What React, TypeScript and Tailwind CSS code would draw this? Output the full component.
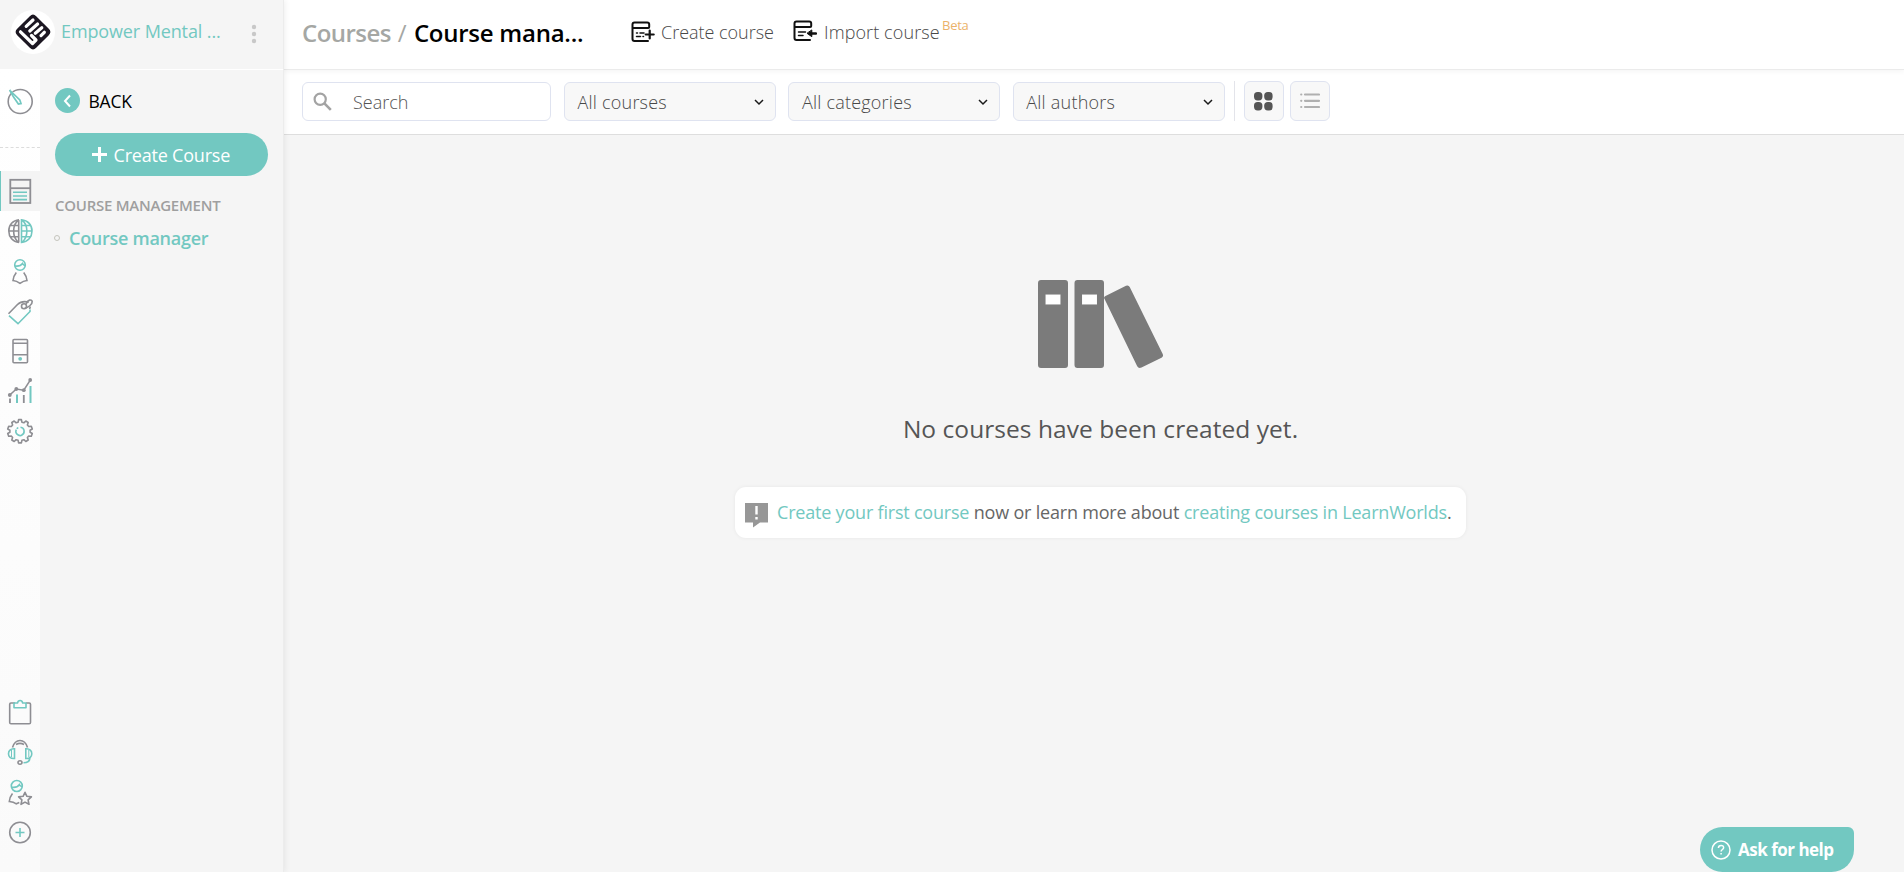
import React from "react";

const TEAL = "#72c8c1";
const GRAY = "#8e8e93";

function RailIcon({ children, active = false }: { children: React.ReactNode; active?: boolean }) {
  return (
    <a
      className={
        active
          ? "flex h-10 w-10 shrink-0 items-center justify-center border-l border-[#72c8c1] bg-[#f4f4f4] pr-px"
          : "flex h-10 w-10 shrink-0 items-center justify-center"
      }
    >
      <svg width="28" height="28" viewBox="0 0 28 28" fill="none" stroke={GRAY} strokeWidth="1.6">
        {children}
      </svg>
    </a>
  );
}

function Rail() {
  return (
    <nav className="flex w-10 shrink-0 flex-col bg-linear-to-b from-white to-[#fafafa] pt-[11px] pb-5">
      <RailIcon>
        <circle cx="14.2" cy="14.5" r="12" />
        <path d="M4 3.5 12 7.8 15 15.5 12.8 17.6 8 12.5Z" fill="#fff" stroke="none" />
        <path d="M4 3.5 13.8 13 15 16.6 12.4 17 7.4 9.8 3.6 3Z" fill="#fff" stroke={TEAL} strokeWidth="1.7" />
      </RailIcon>
      <div className="mt-[26px] mb-[23px] border-t border-dashed border-[#dcdcdc]" />
      <RailIcon active>
        <rect x="4.3" y="2.8" width="20" height="23.2" strokeWidth="1.8" />
        <path d="M4 11.2h20.5" strokeWidth="1.8" />
        <path d="M7 15.2h14M7 19h14M7 22.6h14" stroke={TEAL} strokeWidth="1.6" />
      </RailIcon>
      <RailIcon>
        <path d="M13 2.8C6.800 3.300 2.800 8 2.800 14S6.800 25 13 25.500M12.500 3C6 8 6 20 12.500 25.300M12.700 3v22.500M4.500 8.500h8M3 14h9.500M4.500 19.800h8" />
        <path
          d="M15.500 2.800C22 3.300 26 8 26 14S22 25 15.500 25.500ZM16 3c6.500 5 6.500 17 0 22.300M15.500 8.500h9M15.500 14H26M15.500 19.800h9"
          stroke={TEAL}
        />
      </RailIcon>
      <RailIcon>
        <circle cx="14" cy="8" r="5.300" stroke={TEAL} />
        <path d="M9 9c3.500.500 6-.300 7.500-2.500.6 1.200 1.500 1.800 2.800 2" stroke={TEAL} />
        <path d="M10.300 15.500C8.300 18 7.300 20.500 7 23.500c2 .200 4.500 1 7 2.800 2.500-1.800 5-2.600 7-2.800-.300-3-1.300-5.500-3.300-8" />
      </RailIcon>
      <RailIcon>
        <path d="M2.500 16.800 11.500 7.500C14.500 4.500 18.500 4 22.800 5.200M24.300 9.500 23.600 12" />
        <circle cx="18" cy="9.300" r="2.500" />
        <path d="M18.500 11.500C22 10.500 26.500 7.500 26.200 4.500 25.700 2 21.500 2.500 20.200 7" />
        <path d="m3 18.700 9 8L24 14.500v-2" stroke={TEAL} />
      </RailIcon>
      <RailIcon>
        <rect x="7" y="2.500" width="14.500" height="23.300" rx="1" />
        <path d="M7 6.300h14.500M7 17.800h14.500" />
        <circle cx="14.200" cy="21.800" r="1.900" fill={TEAL} stroke="none" />
      </RailIcon>
      <RailIcon>
        <path d="m3.800 18 6.500-6 7.500 1.200 6.300-9.800" />
        <g fill={GRAY} stroke="none">
          <circle cx="3.800" cy="18" r="1.900" />
          <circle cx="10.300" cy="12" r="1.900" />
          <circle cx="17.800" cy="13.200" r="1.900" />
          <circle cx="24.200" cy="3" r="1.900" />
        </g>
        <path d="M4 21.500V26M17.800 18v8" strokeWidth="1.800" />
        <path d="M11 17.500V26M24.500 9v17" stroke={TEAL} strokeWidth="2" />
      </RailIcon>
      <RailIcon>
        <path
          strokeLinejoin="round"
          d="M12.600 2.600h2.800l.5 2.600 2 .6 1.900-1.800 2.400 1.500-.8 2.500 1.300 1.500 2.600-.2 1 2.700-2.200 1.300v1.900l2.200 1.300-1 2.700-2.600-.2-1.300 1.500.8 2.500-2.400 1.500-1.900-1.800-2 .6-.5 2.600h-2.800l-.5-2.600-2-.6-1.900 1.800-2.400-1.500.8-2.500-1.300-1.500-2.600.2-1-2.700 2.200-1.300v-1.900l-2.200-1.300 1-2.700 2.600.2 1.300-1.500-.8-2.500L8.200 4l1.900 1.800 2-.6Z"
        />
        <path d="M14.500 10.200a4.100 4.100 0 0 1 1 7.900M17.200 16.900a4.100 4.100 0 0 1-6.900-4.300M10.800 11.800a4.100 4.100 0 0 1 1.500-1.200" stroke={TEAL} />
      </RailIcon>
      <div className="grow" />
      <RailIcon>
        <path d="M9 5H5q-1.300 0-1.300 1.300v18.200q0 1.300 1.300 1.300h18.200q1.300 0 1.300-1.300V6.300Q24.500 5 23.200 5H20" />
        <path d="M8 5h3.500q.5-2.500 2.600-2.500T16.700 5H20v4.700H8Z" stroke={TEAL} strokeLinejoin="round" />
      </RailIcon>
      <RailIcon>
        <path d="M6.500 9.500C8 4.500 10.500 2.500 14 2.500s6 2 7.500 7M10 6.500c2.500-1.400 5.500-1.400 8 0" />
        <path
          d="M8.500 10.800v9.700C4.500 21 2.500 18.500 2.500 15.700s2-5.300 6-4.900ZM19.800 10.800v9.700c4 .5 6-2 6-4.800s-2-5.300-6-4.900ZM24 19.800c-.300 3-2.500 5-6.500 5"
          stroke={TEAL}
        />
        <path d="M5.500 12v7M22.800 12v7" stroke={TEAL} strokeWidth="1" />
        <ellipse cx="14" cy="24.500" rx="2" ry="1.700" />
      </RailIcon>
      <RailIcon>
        <circle cx="10.800" cy="8" r="5.500" stroke={TEAL} />
        <path d="M5.800 9.200c3.500.500 6-.300 7.500-2.500.6 1.200 1.500 1.600 2.800 1.800" stroke={TEAL} />
        <path d="M6.500 15.500C4.500 18 3.500 20.500 3.300 23.500c2.200.200 5.200 1 7 2.300l3-1.300" />
        <path
          strokeLinejoin="round"
          d="m19 14.300 1.900 4 4.500.600-3.300 3 .9 4.400-4-2.200-4 2.200.9-4.400-3.300-3 4.500-.6Z"
        />
      </RailIcon>
      <RailIcon>
        <circle cx="14" cy="14.500" r="10.300" />
        <path d="M14 10v9M9.500 14.500h9" stroke={TEAL} />
      </RailIcon>
    </nav>
  );
}

function Logo() {
  return (
    <span className="flex h-11 w-11 shrink-0 items-center justify-center rounded-full bg-white">
      <svg width="36" height="36" viewBox="0 0 36 36" fill="none" strokeLinejoin="round" strokeLinecap="round">
        <path
          d="M14.800 2.200 2.200 14.800q-3.200 3.200 0 6.400L14.800 33.800q3.200 3.200 6.400 0L33.800 21.200q3.200-3.200 0-6.400L21.200 2.200q-3.200-3.200-6.400 0Z"
          fill="#1c1722"
        />
        <g stroke="#fff" strokeWidth="3.200">
          <path d="M5.500 17.800 17.500 29.500 21 26 16.500 21.500" />
          <path d="M11.200 12.400 18 6" />
          <path d="M14.800 17 22.600 10" />
          <path d="M20.300 19.300 26.800 13.800" />
          <path d="M26 21.600 29.300 18.300" />
        </g>
      </svg>
    </span>
  );
}

function Sidebar() {
  return (
    <aside className="relative z-10 flex w-[284px] shrink-0 flex-col border-r border-[#ececec] bg-[#f5f5f5] shadow-[1px_0_6px_rgba(0,0,0,0.07)]">
      <div className="flex h-[70px] shrink-0 items-center border-b border-white pb-[5px] pl-[11px]">
        <Logo />
        <span className="-mt-[2px] ml-[6px] w-[170px] text-[18px] leading-6 tracking-[-0.12px] whitespace-nowrap text-[#72c8c1]">
          Empower Mental ...
        </span>
        <svg className="mt-1 ml-[20px]" width="6" height="20" viewBox="0 0 6 20" fill="#c8c8c8">
          <circle cx="3" cy="3" r="2.200" />
          <circle cx="3" cy="10" r="2.200" />
          <circle cx="3" cy="17" r="2.200" />
        </svg>
      </div>
      <div className="flex grow">
        <Rail />
        <div className="flex grow flex-col pl-[15px]">
          <div className="mt-[18px] flex h-[25px] items-center">
            <span className="flex h-[25px] w-[25px] items-center justify-center rounded-full bg-[#72c8c1]">
              <svg width="10" height="14" viewBox="0 0 10 14" fill="none" stroke="#fff" strokeWidth="2">
                <path d="M7 1.500 2 7l5 5.500" />
              </svg>
            </span>
            <span className="ml-[8.500px] text-[17.500px] leading-6 tracking-[-0.2px] text-black">BACK</span>
          </div>
          <button className="mt-[20px] flex h-[43px] w-[213px] items-center rounded-full bg-[#72c8c1] pl-[37px] text-white">
            <svg width="15" height="15" viewBox="0 0 15 15" stroke="#fff" strokeWidth="3">
              <path d="M7.500 0v15M0 7.500h15" />
            </svg>
            <span className="ml-[6.500px] text-[18px] leading-6 tracking-[-0.2px]">Create Course</span>
          </button>
          <span className="mt-[17px] text-[15px] leading-6 font-semibold tracking-[-0.25px] whitespace-nowrap text-[#9f9f9f]">
            COURSE MANAGEMENT
          </span>
          <div className="mt-[9px] flex items-center">
            <span className="-ml-px h-[6px] w-[6px] rounded-full border border-[#c4c4bc]" />
            <span className="ml-[9px] text-[18px] leading-6 font-semibold tracking-[-0.27px] text-[#72c8c1]">
              Course manager
            </span>
          </div>
        </div>
      </div>
    </aside>
  );
}

function CourseGlyph({ kind }: { kind: "create" | "import" }) {
  return (
    <svg width="24" height="22" viewBox="0 0 24 22" fill="none" stroke="#111" strokeWidth="2" strokeLinecap="round">
      <path d="M18.200 6V3.500Q18.200 1.500 16.200 1.500H3.500q-2 0-2 2v14.600q0 2 2 2h13.500M1.500 7h15.700q1 0 1-1" />
      {kind === "create" ? (
        <>
          <path d="M5.500 12h1M9 12h4M5.500 15.500h4M12 15.500h.5" strokeWidth="1.500" />
          <path d="M18.700 9.500v8M14.700 13.500h8" strokeWidth="2.200" />
        </>
      ) : (
        <>
          <path d="M5.500 12h7M5.500 15.500h4.500" strokeWidth="1.500" />
          <path d="M17 13.500h6" strokeWidth="2.400" />
          <path d="m18.800 10.300v6.400l-4.500-3.200Z" fill="#111" strokeWidth="1" strokeLinejoin="round" />
        </>
      )}
    </svg>
  );
}

function TopBar() {
  return (
    <header className="relative z-[1] flex h-[70px] shrink-0 items-center border-b border-[#ebebeb] bg-white pb-[5px] pl-[18px] shadow-[0_2px_5px_rgba(0,0,0,0.04)]">
      <h1 className="mt-[2px] w-[329px] text-[24px] leading-8 whitespace-nowrap text-black">
        <span className="font-semibold tracking-[-0.55px] text-[#a5a7a4]">Courses</span>
        <span className="tracking-[0.6px] text-[#a5a7a4]"> / </span>
        <span className="font-semibold tracking-[-0.25px]">Course mana...</span>
      </h1>
      <a className="flex items-center text-[#484848]">
        <CourseGlyph kind="create" />
        <span className="ml-[6px] w-[118px] text-[18px] leading-6 font-light tracking-[-0.02px] whitespace-nowrap">
          Create course
        </span>
      </a>
      <a className="ml-[14px] flex items-center text-[#484848]">
        <span className="-mt-[3px]">
          <CourseGlyph kind="import" />
        </span>
        <span className="ml-[7px] w-[118px] text-[18px] leading-6 font-light tracking-[0.1px] whitespace-nowrap">
          Import course
        </span>
        <span className="mb-[15px] text-[13px] leading-4 tracking-[-0.25px] text-[#ebb26a]">Beta</span>
      </a>
    </header>
  );
}

function Select({ label }: { label: string }) {
  return (
    <button className="flex h-[39px] w-[212px] shrink-0 items-center justify-between rounded-[6px] border border-[#dfe3f0] bg-[#f8f8f8] pr-[10px] pl-[12.500px] text-[#484848]">
      <span className="text-[18px] leading-6 font-light tracking-[0.22px]">{label}</span>
      <svg width="12" height="8" viewBox="0 0 12 8" fill="none" stroke="#1a1a1a" strokeWidth="1.500">
        <path d="m2 2 4 4 4-4" />
      </svg>
    </button>
  );
}

function FilterBar() {
  return (
    <div className="flex h-[65px] shrink-0 items-start border-b border-[#dedede] bg-white pt-[11px] pl-[18px]">
      <div className="mt-px flex h-[39px] w-[249px] items-center rounded-[6px] border border-[#dfe3f0] pl-[10px]">
        <svg width="19" height="19" viewBox="0 0 19 19" fill="none" stroke="#a3a3a3" strokeWidth="2.200">
          <circle cx="7.200" cy="7.200" r="5.600" />
          <path d="m11.400 11.400 6.400 6.400" strokeWidth="2.600" />
        </svg>
        <span className="ml-[21px] text-[18px] leading-6 font-light text-[#545454]">Search</span>
      </div>
      <div className="mt-px ml-[13px] flex gap-[12.400px]">
        <Select label="All courses" />
        <Select label="All categories" />
        <Select label="All authors" />
      </div>
      <div className="ml-[9px] h-10 w-px bg-[#e3e4ea]" />
      <button className="ml-[9px] flex h-10 w-10 items-center justify-center rounded-[6px] border border-[#dfe3f0] bg-[#f8f8f8]">
        <svg className="-ml-[2px]" width="20" height="20" viewBox="0 0 20 20" fill="#555">
          <rect x="1" y="1" width="8.400" height="8.400" rx="3.600" />
          <rect x="11.200" y="1" width="8.400" height="8.400" rx="3.600" />
          <rect x="1" y="11" width="8.400" height="8.400" rx="3.600" />
          <rect x="11.200" y="11" width="8.400" height="8.400" rx="3.600" />
        </svg>
      </button>
      <button className="ml-[6px] flex h-10 w-10 items-center justify-center rounded-[6px] border border-[#dfe3f0] bg-[#f8f8f8]">
        <svg width="20" height="18" viewBox="0 0 20 18" fill="none" stroke="#b0b0b0" strokeWidth="2.200" strokeLinecap="round">
          <path d="M1.200 2.500h.1M5 2.500h14M1.200 8.800h.1M5 8.800h14M1.200 15h.1M5 15h14" />
        </svg>
      </button>
    </div>
  );
}

function EmptyState() {
  return (
    <main className="flex grow flex-col items-center pl-[13px]">
      <svg className="mt-[145px] ml-px" width="126" height="88" viewBox="0 0 126 88" fill="#7b7b7b">
        <path fillRule="evenodd" d="M3 0h24q3 0 3 3v82q0 3-3 3H3q-3 0-3-3V3Q0 0 3 0ZM7.500 14.500v10h15v-10Z" />
        <path fillRule="evenodd" d="M39.500 0h23.500q3 0 3 3v82q0 3-3 3H39.500q-3 0-3-3V3q0-3 3-3ZM44 14.500v10h15v-10Z" />
        <path d="M66.300 18.500Q65.500 17 67.500 16L88 5.800q2.500-1.200 3.700 1.200L124.700 74q1 2.500-1.200 3.800L103.500 87.500q-3 1.200-4.300-1.300Z" />
        <path d="M8 15h14v9H8ZM44.500 15h14v9h-14Z" fill="#fff" />
      </svg>
      <h2 className="mt-[45px] text-[24.500px] leading-8 tracking-[0.05px] whitespace-nowrap text-[#555]">
        No courses have been created yet.
      </h2>
      <div className="mt-[42px] flex h-[51px] w-[731px] items-center rounded-[11px] bg-white pl-[10px] shadow-[0_0_4px_rgba(0,0,0,0.06)]">
        <svg className="mt-[5px]" width="23" height="25" viewBox="0 0 23 25">
          <path d="M0 0h23v19.500h-8L8 24.500v-5H0Z" fill="#979797" />
          <path d="M11.500 3v8.500M11.500 14v2.500" stroke="#fff" strokeWidth="2.400" />
        </svg>
        <p className="-mt-px ml-[9px] text-[18px] leading-6 tracking-[-0.2px] whitespace-nowrap text-[#666]">
          <a className="text-[#72c8c1]">Create your first course</a> now or learn more about{" "}
          <a className="text-[#72c8c1]">creating courses in LearnWorlds</a>.
        </p>
      </div>
    </main>
  );
}

export default function App() {
  return (
    <div className="flex h-[872px] w-full overflow-hidden bg-[#f5f5f5] font-['Open_Sans','Noto_Sans',sans-serif]">
      <Sidebar />
      <div className="flex min-w-0 grow flex-col">
        <TopBar />
        <FilterBar />
        <EmptyState />
      </div>
      <button className="fixed right-[50px] bottom-0 z-20 flex h-[45px] w-[154px] items-center rounded-tl-[23px] rounded-tr-[6px] rounded-br-[23px] rounded-bl-[23px] bg-[#72c8c1] pl-[11px] text-white">
        <svg width="20" height="20" viewBox="0 0 20 20" fill="none" stroke="#fff" strokeWidth="1.500">
          <circle cx="10" cy="10" r="9" />
          <path d="M7.400 8q.1-2.600 2.700-2.600T12.600 7.700c0 1.800-2.500 1.800-2.500 3.800M10.100 13v1.600" />
        </svg>
        <span className="ml-[7px] text-[17px] leading-6 font-bold tracking-[-0.5px] whitespace-nowrap">Ask for help</span>
      </button>
    </div>
  );
}
